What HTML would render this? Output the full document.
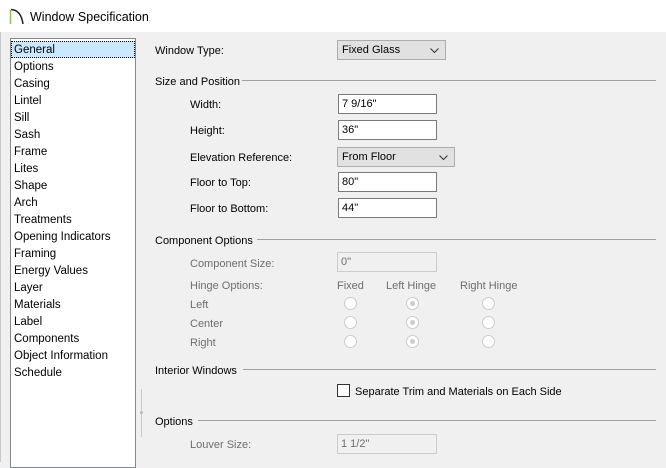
<!DOCTYPE html>
<html><head><style>
*{margin:0;padding:0;box-sizing:border-box}
body{width:666px;height:462px;overflow:hidden;background:#f0f0f0;font-family:"Liberation Sans",sans-serif;font-size:11px;color:#000;position:relative}
.a{position:absolute;white-space:nowrap;line-height:14px}
.title{position:absolute;left:0;top:0;width:666px;height:32px;background:#fff}
.list{position:absolute;left:10px;top:38px;width:126px;height:430px;background:#fff;border:1px solid #828790;font-size:11.5px}
.list div{height:17px;line-height:18px;padding-left:3px}
.sel{background:#cce8ff;outline:1px dotted #000;outline-offset:-1px}
.box{position:absolute;background:#fff;border:1px solid #7a7a7a;height:20px;line-height:19px;padding-left:3px}
.dis{background:#f0f0f0;border-color:#ccc;color:#6d6d6d}
.dd{position:absolute;background:#e1e1e1;border:1px solid #adadad;height:20px;line-height:19px;padding-left:4px}
.dd svg{position:absolute;right:6px;top:7px}
.line{position:absolute;height:1px;background:#a0a0a0}
.g{color:#6d6d6d}
.r{position:absolute;width:13px;height:13px;border-radius:50%;border:1px solid #ccc;background:#fff}
.r.on::after{content:"";position:absolute;left:3px;top:3px;width:5px;height:5px;border-radius:50%;background:#ccc}
</style></head><body>
<div class="title">
<svg style="position:absolute;left:9px;top:7px" width="16" height="18"><path d="M1.5 17V3" stroke="#8dc63f" stroke-width="1.5"/><path d="M2 2.5Q12 3 14 17" stroke="#222" stroke-width="1.5" fill="none"/></svg>
<div class="a" style="left:30px;top:9px;font-size:12.5px;line-height:16px">Window Specification</div>
</div>
<div style="position:absolute;left:0;top:32px;width:1px;height:430px;background:#c8c8c8"></div>
<div class="list">
<div class="sel" style="margin-top:2px">General</div><div>Options</div><div>Casing</div><div>Lintel</div><div>Sill</div><div>Sash</div><div>Frame</div><div>Lites</div><div>Shape</div><div>Arch</div><div>Treatments</div><div>Opening Indicators</div><div>Framing</div><div>Energy Values</div><div>Layer</div><div>Materials</div><div>Label</div><div>Components</div><div>Object Information</div><div>Schedule</div>
</div>

<div class="a" style="left:155px;top:44px">Window Type:</div>
<div class="dd" style="left:337px;top:40px;width:109px">Fixed Glass<svg width="9" height="6"><path d="M0.5 0.5L4.5 4.5L8.5 0.5" stroke="#333" fill="none"/></svg></div>

<div class="a" style="left:155px;top:75px">Size and Position</div>
<div class="line" style="left:242px;top:80px;width:414px"></div>
<div class="a" style="left:190px;top:98px">Width:</div>
<div class="box" style="left:338px;top:94px;width:99px">7 9/16"</div>
<div class="a" style="left:190px;top:124px">Height:</div>
<div class="box" style="left:338px;top:120px;width:99px">36"</div>
<div class="a" style="left:190px;top:151px">Elevation Reference:</div>
<div class="dd" style="left:337px;top:147px;width:118px">From Floor<svg width="9" height="6"><path d="M0.5 0.5L4.5 4.5L8.5 0.5" stroke="#333" fill="none"/></svg></div>
<div class="a" style="left:190px;top:176px">Floor to Top:</div>
<div class="box" style="left:338px;top:172px;width:99px">80"</div>
<div class="a" style="left:190px;top:202px">Floor to Bottom:</div>
<div class="box" style="left:338px;top:198px;width:99px">44"</div>

<div class="a" style="left:155px;top:234px">Component Options</div>
<div class="line" style="left:257px;top:239px;width:399px"></div>
<div class="a g" style="left:190px;top:257px">Component Size:</div>
<div class="box dis" style="left:337px;top:252px;width:100px">0"</div>
<div class="a g" style="left:190px;top:279px">Hinge Options:</div>
<div class="a g" style="left:337px;top:279px">Fixed</div>
<div class="a g" style="left:386px;top:279px">Left Hinge</div>
<div class="a g" style="left:460px;top:279px">Right Hinge</div>
<div class="a g" style="left:190px;top:298px">Left</div>
<div class="a g" style="left:190px;top:317px">Center</div>
<div class="a g" style="left:190px;top:336px">Right</div>
<div class="r" style="left:344px;top:297px"></div><div class="r on" style="left:406px;top:297px"></div><div class="r" style="left:482px;top:297px"></div>
<div class="r" style="left:344px;top:316px"></div><div class="r on" style="left:406px;top:316px"></div><div class="r" style="left:482px;top:316px"></div>
<div class="r" style="left:344px;top:335px"></div><div class="r on" style="left:406px;top:335px"></div><div class="r" style="left:482px;top:335px"></div>

<div class="a" style="left:155px;top:364px">Interior Windows</div>
<div class="line" style="left:243px;top:369px;width:413px"></div>
<div style="position:absolute;left:337px;top:384px;width:13px;height:13px;border:1px solid #333;background:#fff"></div>
<div class="a" style="left:355px;top:385px">Separate Trim and Materials on Each Side</div>
<div style="position:absolute;left:141px;top:389px;width:1px;height:48px;background:#c8c8c8"></div>
<div style="position:absolute;left:140px;top:411px;width:3px;height:3px;border-radius:50%;background:#bbb"></div>

<div class="a" style="left:155px;top:415px">Options</div>
<div class="line" style="left:198px;top:420px;width:458px"></div>
<div class="a g" style="left:190px;top:438px">Louver Size:</div>
<div class="box dis" style="left:337px;top:434px;width:100px">1 1/2"</div>
</body></html>
